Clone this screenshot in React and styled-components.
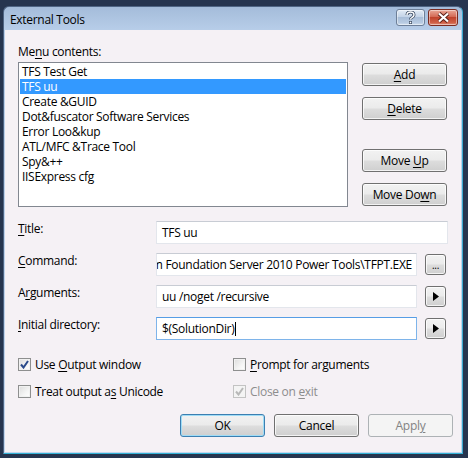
import React from 'react'
import styled, { createGlobalStyle, css } from 'styled-components'

const FONT = `'Open Sans', 'Noto Sans', sans-serif`

const GlobalStyle = createGlobalStyle`
	html, body {
		margin: 0;
		padding: 0;
	}
	body {
		background: #26354f;
		font-family: ${FONT};
		font-size: 12px;
		letter-spacing: -0.3px;
		color: #000;
	}
	* {
		box-sizing: border-box;
	}
`

const Desktop = styled.div`
	width: 468px;
	height: 458px;
	padding: 6px 5px 4px 3px;
	background: #26354f;
`

const Window = styled.div`
	height: 100%;
	display: flex;
	flex-direction: column;
	border: 1px solid #4f6584;
	border-right-color: #3aa9cf;
	border-bottom-color: #34b2d6;
	border-radius: 6px 6px 0 0;
	background: linear-gradient(#a4bcda, #b8cee9 24px, #c2d6ee);
`

const TitleBar = styled.div`
	height: 23px;
	display: flex;
	align-items: flex-start;
	padding: 0 4px 0 6px;
`

const Caption = styled.div`
	flex: 1;
	line-height: 25px;
	font-size: 12px;
`

const CaptionButton = styled.div`
	width: ${p => p.$w}px;
	height: 17px;
	margin-top: 2px;
	margin-left: 3px;
	border: 1px solid ${p => (p.$close ? '#7b2b20' : '#6d7f98')};
	border-radius: 3px;
	display: flex;
	align-items: center;
	justify-content: center;
	box-shadow: inset 0 0 0 1px rgba(255, 255, 255, 0.45);
	background: ${p =>
		p.$close
			? 'linear-gradient(#e9a898, #d46a55 45%, #c0432c 50%, #cf6148 85%, #e29480)'
			: 'linear-gradient(#e2ebf5, #c4d4e7 45%, #a9bed8 50%, #b8cbe2 85%, #d3e0ef)'};
`

const Client = styled.div`
	flex: 1;
	margin: 0 1px 1px;
	background: #f5f1f5;
	padding: 14px 13px 15px 13px;
	display: flex;
	flex-direction: column;
`

const Key = styled.u`
	text-decoration: underline;
	text-underline-offset: 2px;
`

const TopSection = styled.div`
	display: flex;
`

const ListColumn = styled.div`
	width: 330px;
	display: flex;
	flex-direction: column;
`

const Label = styled.div`
	height: 16px;
	line-height: 16px;
	margin-bottom: 2px;
`

const ListBox = styled.div`
	height: 145px;
	border: 1px solid #828790;
	background: #fff;
	padding: 1px;
`

const ListItem = styled.div`
	height: 15px;
	line-height: 15px;
	padding-left: 2px;
	white-space: nowrap;
	background: ${p => (p.$selected ? '#3399ff' : 'transparent')};
	color: ${p => (p.$selected ? '#fff' : '#000')};
`

const SideButtons = styled.div`
	margin-left: 14px;
	padding-top: 19px;
	display: flex;
	flex-direction: column;
`

const buttonFace = css`
	border: 1px solid #707070;
	border-radius: 3px;
	background: linear-gradient(#f2f2f2, #ebebeb 48%, #dddddd 52%, #cfcfcf);
	box-shadow: inset 0 0 0 1px rgba(255, 255, 255, 0.75);
`

const PushButton = styled.div`
	${buttonFace}
	width: 85px;
	height: 23px;
	display: flex;
	align-items: center;
	justify-content: center;
	margin-top: ${p => p.$mt || 0}px;
	${p =>
		p.$default &&
		css`
			border-color: #3c7fb1;
			box-shadow: inset 0 0 0 1px #9fdcf6;
		`}
	${p =>
		p.$disabled &&
		css`
			border-color: #adb2b5;
			background: #f4f4f4;
			box-shadow: none;
			color: #838383;
		`}
`

const Form = styled.div`
	margin-top: 14px;
	display: flex;
	flex-direction: column;
	gap: 9px;
`

const FieldRow = styled.div`
	display: flex;
	align-items: flex-start;
`

const FieldLabel = styled.div`
	width: 138px;
	line-height: 15px;
`

const TextBox = styled.div`
	width: ${p => p.$w}px;
	height: 23px;
	background: #fff;
	border: 1px solid #e3e6ec;
	border-top-color: #c8ccd4;
	padding: 0 4px 0 5px;
	display: flex;
	align-items: center;
	justify-content: ${p => (p.$scrolled ? 'flex-end' : 'flex-start')};
	overflow: hidden;
	white-space: nowrap;
	${p =>
		p.$focused &&
		css`
			border-color: #7eb4ea;
			border-top-color: #569de5;
		`}
`

const Caret = styled.span`
	display: inline-block;
	width: 1px;
	height: 14px;
	background: #000;
	margin-left: 1px;
	vertical-align: middle;
`

const SmallButton = styled.div`
	${buttonFace}
	width: 21px;
	height: 21px;
	margin: 1px 0 0 8px;
	display: flex;
	align-items: center;
	justify-content: center;
	font-size: 10px;
	line-height: 1;
`

const Checks = styled.div`
	margin-top: 16px;
	display: grid;
	grid-template-columns: 215px 1fr;
	row-gap: 10px;
`

const CheckRow = styled.div`
	height: 17px;
	display: flex;
	align-items: center;
	gap: 4px;
	color: ${p => (p.$disabled ? '#8d8d8d' : '#000')};
`

const Box = styled.span`
	width: 13px;
	height: 13px;
	border: 1px solid ${p => (p.$disabled ? '#c3c3c3' : '#8e8f8f')};
	background: ${p =>
		p.$disabled
			? '#f4f4f4'
			: 'linear-gradient(135deg, #dcdcdc, #f4f4f4 60%, #ffffff)'};
	box-shadow: inset 0 0 0 1px ${p => (p.$disabled ? '#f4f4f4' : '#f1f1f1')};
	display: flex;
	align-items: center;
	justify-content: center;
	flex-shrink: 0;
`

const ButtonBar = styled.div`
	margin-top: 14px;
	margin-right: -5px;
	display: flex;
	justify-content: flex-end;
	gap: 9px;
`

const Arrow = () => (
	<svg width='6' height='9' viewBox='0 0 6 9'>
		<path d='M0 0 L6 4.5 L0 9 Z' fill='#000' />
	</svg>
)

const Check = ({ disabled }) => (
	<svg width='9' height='9' viewBox='0 0 9 9'>
		<path
			d='M1 4.5 L3.5 7.5 L8 1'
			fill='none'
			stroke={disabled ? '#b8b8b8' : '#2a4a8a'}
			strokeWidth='2'
		/>
	</svg>
)

const CheckBox = ({ checked, disabled, children }) => (
	<CheckRow $disabled={disabled}>
		<Box $disabled={disabled}>{checked && <Check disabled={disabled} />}</Box>
		<span>{children}</span>
	</CheckRow>
)

const MenuItems = [
	'TFS Test Get',
	'TFS uu',
	'Create &GUID',
	'Dot&fuscator Software Services',
	'Error Loo&kup',
	'ATL/MFC &Trace Tool',
	'Spy&++',
	'IISExpress cfg',
]

const ExternalTools = () => {
	return (
		<Desktop>
			<GlobalStyle />
			<Window>
				<TitleBar>
					<Caption>External Tools</Caption>
					<CaptionButton $w={29}>
						<svg width='11' height='13' viewBox='0 0 11 13'>
							<path
								d='M2 4 Q2 1 5.5 1 Q9 1 9 4 Q9 5.5 7 6.5 Q5.5 7.3 5.5 8.5'
								fill='none'
								stroke='#3a4a60'
								strokeWidth='3'
							/>
							<path
								d='M2 4 Q2 1 5.5 1 Q9 1 9 4 Q9 5.5 7 6.5 Q5.5 7.3 5.5 8.5'
								fill='none'
								stroke='#fff'
								strokeWidth='1.4'
							/>
							<rect x='4' y='10' width='3' height='3' fill='#3a4a60' />
							<rect x='4.7' y='10.7' width='1.6' height='1.6' fill='#fff' />
						</svg>
					</CaptionButton>
					<CaptionButton $w={30} $close>
						<svg width='13' height='11' viewBox='0 0 13 11'>
							<path d='M2 1.5 L11 9.5 M11 1.5 L2 9.5' stroke='#5a2018' strokeWidth='4' />
							<path d='M2 1.5 L11 9.5 M11 1.5 L2 9.5' stroke='#fff' strokeWidth='2.2' />
						</svg>
					</CaptionButton>
				</TitleBar>
				<Client>
					<TopSection>
						<ListColumn>
							<Label>
								Me<Key>n</Key>u contents:
							</Label>
							<ListBox>
								{MenuItems.map((item, i) => (
									<ListItem key={item} $selected={i === 1}>
										{item}
									</ListItem>
								))}
							</ListBox>
						</ListColumn>
						<SideButtons>
							<PushButton>
								<span>
									<Key>A</Key>dd
								</span>
							</PushButton>
							<PushButton $mt={11}>
								<span>
									<Key>D</Key>elete
								</span>
							</PushButton>
							<PushButton $mt={29}>
								<span>
									Move <Key>U</Key>p
								</span>
							</PushButton>
							<PushButton $mt={11}>
								<span>
									Move Do<Key>w</Key>n
								</span>
							</PushButton>
						</SideButtons>
					</TopSection>

					<Form>
						<FieldRow>
							<FieldLabel>
								<Key>T</Key>itle:
							</FieldLabel>
							<TextBox $w={292}>TFS uu</TextBox>
						</FieldRow>
						<FieldRow>
							<FieldLabel>
								<Key>C</Key>ommand:
							</FieldLabel>
							<TextBox $w={261} $scrolled>
								<span>C:\Program Files (x86)\Microsoft Team Foundation Server 2010 Power Tools\TFPT.EXE</span>
							</TextBox>
							<SmallButton>...</SmallButton>
						</FieldRow>
						<FieldRow>
							<FieldLabel>
								A<Key>r</Key>guments:
							</FieldLabel>
							<TextBox $w={261}>uu /noget /recursive</TextBox>
							<SmallButton>
								<Arrow />
							</SmallButton>
						</FieldRow>
						<FieldRow>
							<FieldLabel>
								<Key>I</Key>nitial directory:
							</FieldLabel>
							<TextBox $w={261} $focused>
								<span>$(SolutionDir)</span>
								<Caret />
							</TextBox>
							<SmallButton>
								<Arrow />
							</SmallButton>
						</FieldRow>
					</Form>

					<Checks>
						<CheckBox checked>
							Use <Key>O</Key>utput window
						</CheckBox>
						<CheckBox>
							<Key>P</Key>rompt for arguments
						</CheckBox>
						<CheckBox>
							Treat output a<Key>s</Key> Unicode
						</CheckBox>
						<CheckBox checked disabled>
							Close on <Key>e</Key>xit
						</CheckBox>
					</Checks>

					<ButtonBar>
						<PushButton $default>OK</PushButton>
						<PushButton>Cancel</PushButton>
						<PushButton $disabled>
							<span>
								Appl<Key>y</Key>
							</span>
						</PushButton>
					</ButtonBar>
				</Client>
			</Window>
		</Desktop>
	)
}

export default ExternalTools
